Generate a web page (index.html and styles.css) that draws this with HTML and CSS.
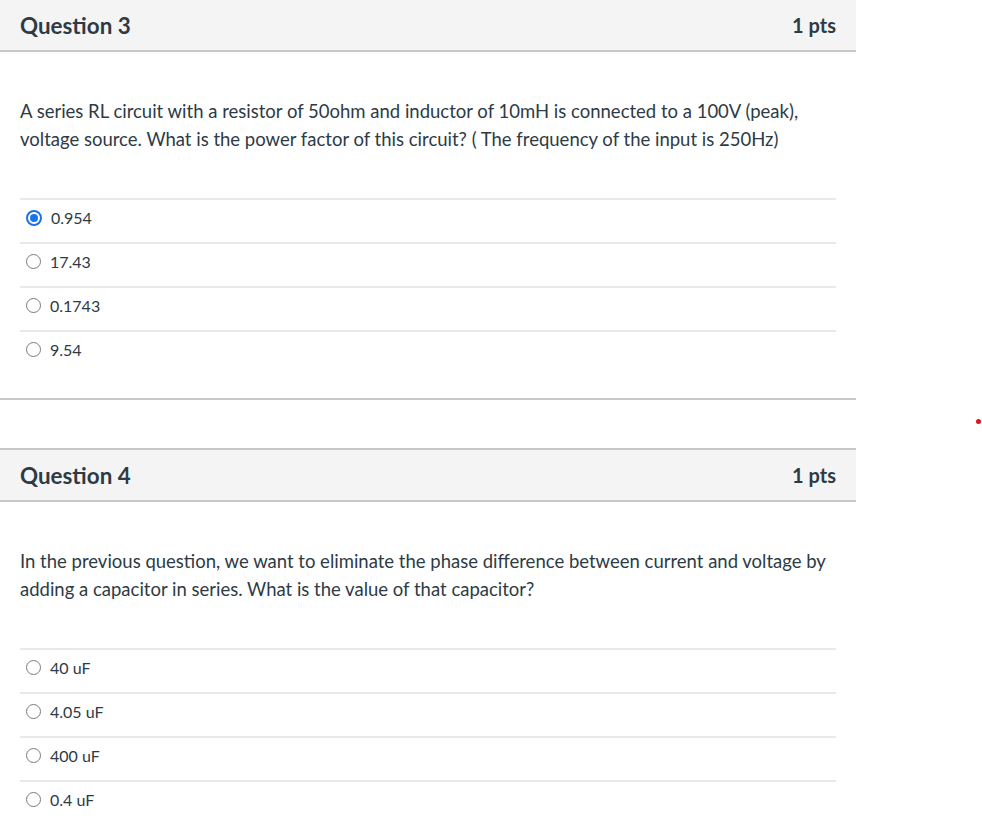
FILE: index.html
```html
<!DOCTYPE html>
<html>
<head>
<meta charset="utf-8">
<link rel="stylesheet" href="styles.css">
</head>
<body>
<div class="page">
  <section class="question">
    <header class="q-header">
      <h2 class="q-title">Question 3</h2>
      <span class="q-pts">1 pts</span>
    </header>
    <div class="q-body">
      <p class="q-text">A series RL circuit with a resistor of 50ohm and inductor of 10mH is connected to a 100V (peak), voltage source. What is the power factor of this circuit? ( The frequency of the input is 250Hz)</p>
      <ul class="answers">
        <li class="answer"><span class="radio checked"></span><span class="label">0.954</span></li>
        <li class="answer"><span class="radio"></span><span class="label">17.43</span></li>
        <li class="answer"><span class="radio"></span><span class="label">0.1743</span></li>
        <li class="answer"><span class="radio"></span><span class="label">9.54</span></li>
      </ul>
    </div>
  </section>
  <div class="q-sep"></div>
  <section class="question">
    <header class="q-header bordered">
      <h2 class="q-title">Question 4</h2>
      <span class="q-pts">1 pts</span>
    </header>
    <div class="q-body">
      <p class="q-text">In the previous question, we want to eliminate the phase difference between current and voltage by adding a capacitor in series. What is the value of that capacitor?</p>
      <ul class="answers">
        <li class="answer"><span class="radio"></span><span class="label">40 uF</span></li>
        <li class="answer"><span class="radio"></span><span class="label">4.05 uF</span></li>
        <li class="answer"><span class="radio"></span><span class="label">400 uF</span></li>
        <li class="answer"><span class="radio"></span><span class="label">0.4 uF</span></li>
      </ul>
    </div>
  </section>
</div>
<span class="red-dot"></span>
</body>
</html>
```
FILE: styles.css
```css
html, body {
  margin: 0;
  padding: 0;
  background: #ffffff;
  overflow: hidden;
}
body {
  font-family: Lato, "Open Sans", sans-serif;
  color: #2d3b45;
  height: 836px;
  position: relative;
}
.page {
  width: 856px;
  margin-top: -2px;
}
.q-header {
  display: flex;
  justify-content: space-between;
  align-items: center;
  height: 50px;
  padding: 0 20px;
  background: #f4f4f4;
  border-top: 2px solid #c8c8c8;
  border-bottom: 2px solid #c8c8c8;
}
.q-title {
  margin: 0;
  font-size: 22.4px;
  font-weight: 700;
  color: #2d3b45;
}
.q-pts {
  font-size: 20px;
  font-weight: 700;
  color: #2d3b45;
}
.q-body {
  padding: 45px 20px 24px;
}
.q-text {
  margin: 0 0 45px;
  font-size: 18.5px;
  line-height: 28px;
}
.answers {
  list-style: none;
  margin: 0;
  padding: 0;
}
.answer {
  display: flex;
  align-items: center;
  height: 44px;
  border-top: 2px solid #e8e8e8;
  box-sizing: border-box;
  padding-left: 6px;
  font-size: 16px;
}
.radio {
  width: 13px;
  height: 13px;
  border: 1.5px solid #7a7a7a;
  border-radius: 50%;
  margin-right: 9px;
  position: relative;
  box-sizing: content-box;
  margin-top: -7px;
}
.radio.checked {
  border: 2px solid #1a73e8;
  width: 12px;
  height: 12px;
}
.radio.checked::after {
  content: "";
  position: absolute;
  left: 2px;
  top: 2px;
  width: 8px;
  height: 8px;
  border-radius: 50%;
  background: #1a73e8;
}
.label {
  margin-top: -7px;
}
.q-sep {
  height: 2px;
  background: #c8c8c8;
  margin-bottom: 48px;
}
.red-dot {
  position: absolute;
  left: 976px;
  top: 419px;
  width: 5px;
  height: 5px;
  border-radius: 50%;
  background: #e0101a;
}
```
